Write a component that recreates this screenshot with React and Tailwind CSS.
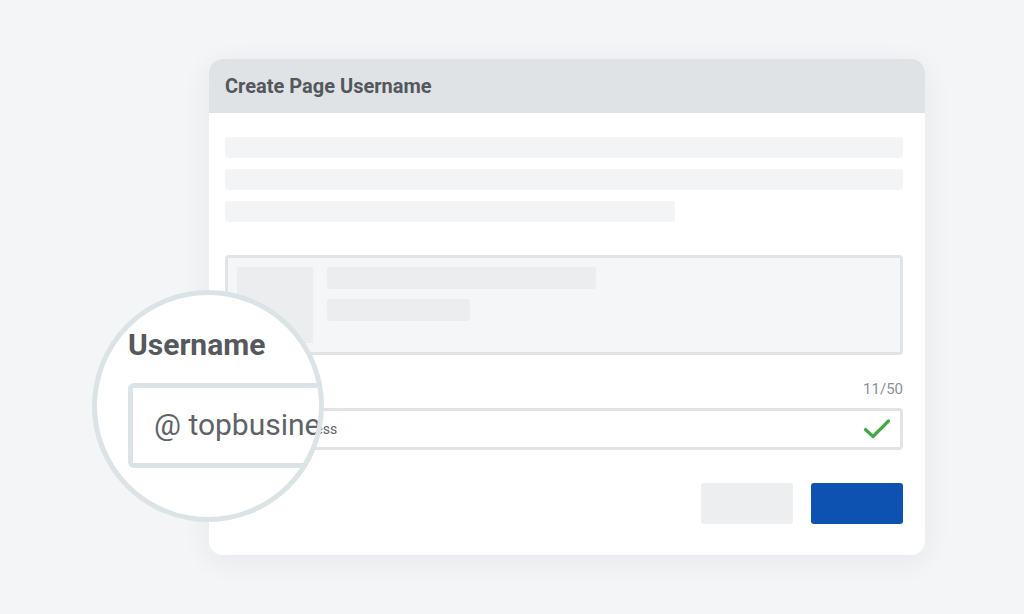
const Bar = ({ w, h = "h-[21px]", color = "bg-[#f3f4f6]" }) => (
  <div className={`${h} ${w} ${color} rounded-[3px]`} />
);

export default function App() {
  return (
    <div className="relative min-h-[614px] w-full bg-[#f4f5f7] pt-[59px] pl-[209px] font-['Roboto',sans-serif] overflow-hidden">
      {/* dialog card */}
      <div className="w-[716px] h-[496px] bg-white rounded-[14px] overflow-hidden shadow-[0_6px_28px_rgba(30,40,60,0.07)]">
        <div className="h-[54px] bg-[#dfe3e6] pl-4 flex items-center">
          <h1 className="text-[20px] font-bold text-[#54575b] leading-none">
            Create Page Username
          </h1>
        </div>

        <div className="pl-4 pr-[22px] pt-[24px]">
          <div className="flex flex-col gap-[11px]">
            <Bar w="w-full" />
            <Bar w="w-full" />
            <Bar w="w-[450px]" />
          </div>

          <div className="mt-[33px] h-[100px] border-[3px] border-[#e0e4e7] bg-[#f5f6f7] rounded-[4px] p-[9px] flex gap-[14px]">
            <div className="w-[76px] h-[76px] bg-[#ebedef]" />
            <div className="flex flex-col gap-[10px]">
              <Bar w="w-[269px]" h="h-[22px]" color="bg-[#ebedef]" />
              <Bar w="w-[143px]" h="h-[22px]" color="bg-[#ebedef]" />
            </div>
          </div>

          <div className="mt-[26px] flex justify-end text-[15px] leading-[16px] text-[#8a9099]">
            11/50
          </div>

          <div className="mt-[11px] h-[42px] border-[3px] border-[#e0e4e7] rounded-[4px] flex items-center justify-between pl-[17px] pr-[9px]">
            <span className="text-[14px] text-[#5f6368]">@ topbusiness</span>
            <svg width="28" height="22" viewBox="0 0 28 22" fill="none">
              <path
                d="M2.5 11.5 L10 18.5 L25.5 3"
                stroke="#43a846"
                strokeWidth="3.2"
                strokeLinecap="round"
                strokeLinejoin="round"
              />
            </svg>
          </div>

          <div className="mt-[33px] flex justify-end gap-[18px]">
            <button className="w-[92px] h-[41px] bg-[#eceef0] rounded-[3px]" />
            <button className="w-[92px] h-[41px] bg-[#0d52b0] rounded-[3px]" />
          </div>
        </div>
      </div>

      {/* magnifier lens */}
      <div className="absolute left-[92px] top-[290px] w-[232px] h-[232px] rounded-full border-[5px] border-[#dce3e6] bg-white overflow-hidden">
        <div className="absolute left-[31px] top-[33px] text-[30px] font-bold leading-[34px] text-[#55585c]">
          Username
        </div>
        <div className="absolute left-[31px] top-[88px] w-[400px] h-[85px] border-[5px] border-[#dce3e6] rounded-[6px] flex items-center pl-[21px]">
          <span className="text-[30px] leading-none text-[#5f6368] pb-[2px]">
            @ topbusiness
          </span>
        </div>
      </div>
    </div>
  );
}
